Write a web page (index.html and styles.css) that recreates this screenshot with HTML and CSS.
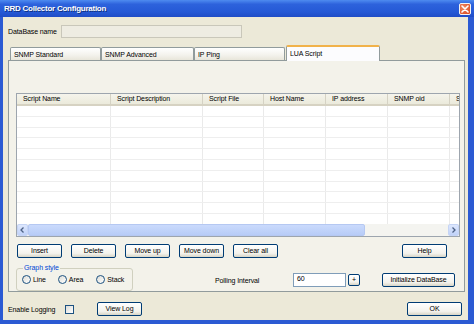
FILE: index.html
```html
<!DOCTYPE html>
<html>
<head>
<meta charset="utf-8">
<link rel="stylesheet" href="styles.css">
</head>
<body>
<div class="window">
  <div class="titlebar">
    <span class="title">RRD Collector Configuration</span>
    <span class="close"><svg width="8" height="8" viewBox="0 0 8 8"><path d="M1 1L7 7M7 1L1 7" stroke="#fff" stroke-width="1.6" stroke-linecap="round"/></svg></span>
  </div>
  <div class="client">
    <div class="dbrow">
      <span class="dblabel">DataBase name</span>
      <span class="dbinput"></span>
    </div>
    <div class="tabs">
      <div class="tab t1">SNMP Standard</div>
      <div class="tab t2">SNMP Advanced</div>
      <div class="tab t3">IP Ping</div>
      <div class="tab sel">LUA Script</div>
    </div>
    <div class="panel">
      <div class="table">
        <div class="thead">
          <div class="th">Script Name</div>
          <div class="th">Script Description</div>
          <div class="th">Script File</div>
          <div class="th">Host Name</div>
          <div class="th">IP address</div>
          <div class="th">SNMP oid</div>
          <div class="th last">SN</div>
        </div>
        <div class="tbody">
          <div class="tr"><div></div><div></div><div></div><div></div><div></div><div></div><div></div></div>
          <div class="tr"><div></div><div></div><div></div><div></div><div></div><div></div><div></div></div>
          <div class="tr"><div></div><div></div><div></div><div></div><div></div><div></div><div></div></div>
          <div class="tr"><div></div><div></div><div></div><div></div><div></div><div></div><div></div></div>
          <div class="tr"><div></div><div></div><div></div><div></div><div></div><div></div><div></div></div>
          <div class="tr"><div></div><div></div><div></div><div></div><div></div><div></div><div></div></div>
          <div class="tr"><div></div><div></div><div></div><div></div><div></div><div></div><div></div></div>
          <div class="tr"><div></div><div></div><div></div><div></div><div></div><div></div><div></div></div>
          <div class="tr"><div></div><div></div><div></div><div></div><div></div><div></div><div></div></div>
          <div class="tr"><div></div><div></div><div></div><div></div><div></div><div></div><div></div></div>
          <div class="tr"><div></div><div></div><div></div><div></div><div></div><div></div><div></div></div>
          <div class="tr"><div></div><div></div><div></div><div></div><div></div><div></div><div></div></div>
        </div>
        <div class="hscroll">
          <div class="sbtn"><svg width="5" height="6" viewBox="0 0 5 6"><path d="M3.5 0.5L1 3L3.5 5.5" fill="none" stroke="#4D6185" stroke-width="1.3"/></svg></div>
          <div class="thumb"></div>
          <div class="track"></div>
          <div class="sbtn"><svg width="5" height="6" viewBox="0 0 5 6"><path d="M1.5 0.5L4 3L1.5 5.5" fill="none" stroke="#4D6185" stroke-width="1.3"/></svg></div>
        </div>
      </div>
      <div class="btnrow">
        <button class="btn">Insert</button>
        <button class="btn">Delete</button>
        <button class="btn">Move up</button>
        <button class="btn">Move down</button>
        <button class="btn">Clear all</button>
        <button class="btn help">Help</button>
      </div>
      <div class="grouprow">
        <fieldset class="group">
          <legend>Graph style</legend>
          <label class="radio"><span class="circle"></span>Line</label>
          <label class="radio"><span class="circle"></span>Area</label>
          <label class="radio"><span class="circle"></span>Stack</label>
        </fieldset>
        <span class="polllabel">Polling Interval</span>
        <span class="pollinput">60</span>
        <button class="btn plus">+</button>
        <button class="btn init">Initialize DataBase</button>
      </div>
    </div>
    <div class="bottomrow">
      <span class="loglabel">Enable Logging</span>
      <span class="check"></span>
      <button class="btn viewlog">View Log</button>
      <button class="btn ok">OK</button>
    </div>
  </div>
</div>
</body>
</html>
```
FILE: styles.css
```css
* { box-sizing: border-box; margin: 0; padding: 0; }
html, body { width: 474px; height: 324px; overflow: hidden; }
body {
  font-family: "Liberation Sans", Arial, sans-serif;
  font-size: 7px;
  letter-spacing: -0.1px;
  color: #000;
  background: #fff;
  white-space: nowrap;
}
.window {
  width: 474px;
  height: 324px;
  background: #2B5AD3;
  padding: 0 6px 4px 3px;
  display: flex;
  flex-direction: column;
}
.titlebar {
  height: 17px;
  flex: none;
  margin: 0 -6px 0 -3px;
  padding: 0 3px 0 4px;
  display: flex;
  align-items: center;
  justify-content: space-between;
  background: linear-gradient(#4E8BF0, #2D62DC 25%, #2559D6 70%, #1F4CC6);
}
.title {
  color: #fff;
  font-weight: bold;
  font-size: 8px;
  letter-spacing: -0.25px;
  text-shadow: 1px 1px 0 #10307F;
}
.close {
  width: 12px;
  height: 12px;
  border: 1px solid #F3F3F3;
  border-radius: 2px;
  background: radial-gradient(circle at 35% 35%, #F08A62, #D9451C);
  display: flex;
  align-items: center;
  justify-content: center;
}
.client {
  flex: 1;
  background: #ECE9D8;
  display: flex;
  flex-direction: column;
  padding: 8px 0 0 5px;
}
.dbrow {
  height: 13px;
  display: flex;
  align-items: center;
}
.dblabel { width: 53px; }
.dbinput {
  width: 181px;
  height: 13px;
  border: 1px solid #C9C7BA;
  background: #EEECE2;
}
.tabs {
  margin-top: 7px;
  height: 15px;
  display: flex;
  align-items: flex-end;
  padding-left: 2px;
  position: relative;
  z-index: 1;
}
.tab {
  height: 13px;
  border: 1px solid #919B9C;
  border-bottom: none;
  border-radius: 2px 2px 0 0;
  background: linear-gradient(#FFFFFF, #F3F2EC 60%, #E8E6DA);
  padding: 2px 0 0 3px;
  line-height: 9px;
}
.t1 { width: 91px; }
.t2 { width: 93px; }
.t3 { width: 91px; }
.sel {
  width: 94px;
  height: 16px;
  margin-left: 1px;
  margin-bottom: -1px;
  background: #FCFCFE;
  border-top: 2px solid #F1B24A;
  padding-top: 2px;
}
.panel {
  width: 457px;
  height: 232px;
  border: 1px solid #919B9C;
  background: #F3F2EA;
  padding: 32px 0 0 7px;
  display: flex;
  flex-direction: column;
}
.table {
  width: 444px;
  height: 144px;
  border: 1px solid #9DA5AE;
  background: #fff;
  display: flex;
  flex-direction: column;
  overflow: hidden;
}
.thead, .tr {
  display: grid;
  grid-template-columns: 94px 92px 61px 62px 62px 62px 62px;
  flex: none;
}
.thead {
  height: 12px;
  background: linear-gradient(#F5F4EC, #EBEADB);
  border-bottom: 2px solid #D6D2C2;
}
.th {
  padding-left: 6px;
  line-height: 10px;
  border-right: 1px solid #D5D2C4;
  overflow: hidden;
}
.tbody {
  flex: 1;
  overflow: hidden;
}
.tr { height: 10.8px; border-bottom: 1px solid #EEEEEE; }
.tr div { border-right: 1px solid #EAEAEA; }
.hscroll {
  height: 12px;
  flex: none;
  display: flex;
  background: #F4F4F0;
}
.sbtn {
  width: 11px;
  height: 12px;
  background: linear-gradient(#DDE7FD, #C0D2F8);
  border: 1px solid #C5D4F5;
  border-radius: 2px;
  display: flex;
  align-items: center;
  justify-content: center;
}
.thumb {
  width: 337px;
  background: linear-gradient(#CADAFC, #B7CCF7);
  border: 1px solid #B5C8F2;
  border-radius: 2px;
}
.track { flex: 1; }
.btn {
  font-family: inherit;
  font-size: 7px;
  letter-spacing: -0.1px;
  color: #000;
  height: 14px;
  border: 1px solid #003C74;
  border-radius: 2px;
  background: linear-gradient(#FFFFFF, #F3F2EC 70%, #D8D5C6);
  line-height: 12px;
  text-align: center;
}
.btnrow {
  width: 444px;
  margin-top: 7px;
  padding-left: 1px;
  display: flex;
  gap: 9px;
}
.btnrow .btn { width: 45px; }
.btnrow .help { margin-left: auto; margin-right: 13px; }
.grouprow {
  margin-top: 6px;
  display: flex;
  align-items: flex-end;
}
.group {
  width: 117px;
  height: 27px;
  border: 1px solid #D0D0BF;
  border-radius: 3px;
  padding: 0 0 0 5px;
  display: flex;
  align-items: center;
  gap: 12px;
}
.group legend {
  color: #0046D5;
  padding: 0 1px;
  margin-left: 1px;
  line-height: 8px;
}
.radio {
  display: flex;
  align-items: center;
  gap: 2px;
  margin-top: -3px;
}
.radio:nth-of-type(3) { margin-left: 1px; }
.circle {
  width: 9px;
  height: 9px;
  border-radius: 50%;
  border: 1px solid #1C5180;
  background: linear-gradient(135deg, #DCDCD7, #FFFFFF);
}
.polllabel {
  margin-left: 82px;
  width: 78px;
  margin-bottom: 7px;
}
.pollinput {
  width: 53px;
  height: 14px;
  border: 1px solid #7F9DB9;
  background: #fff;
  padding: 1px 0 0 3px;
  margin-bottom: 4px;
}
.plus {
  width: 12px;
  height: 12px;
  margin-left: 2px;
  margin-bottom: 5px;
  line-height: 10px;
}
.init {
  width: 73px;
  margin-left: 22px;
  margin-bottom: 4px;
}
.bottomrow {
  margin-top: 10px;
  height: 14px;
  display: flex;
  align-items: center;
}
.loglabel { width: 57px; }
.check {
  width: 9px;
  height: 9px;
  border: 1px solid #1C5180;
  background: linear-gradient(135deg, #DCDCD7, #FFFFFF);
}
.viewlog { width: 45px; margin-left: 23px; }
.ok { width: 55px; margin-left: 265px; }
```
